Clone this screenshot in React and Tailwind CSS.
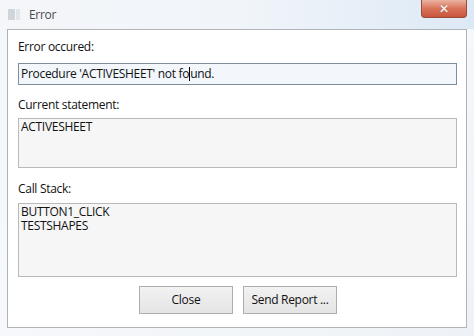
const FONT = { fontFamily: '"Open Sans", "Noto Sans", sans-serif' };

function TextArea({ text, className }) {
  return (
    <div
      className={`whitespace-pre-line border border-[#b9b9b9] bg-[#f6f6f6] px-[2px] pt-[1px] text-[12px] leading-[14px] text-[#111] tracking-[-0.3px] ${className}`}
    >
      {text}
    </div>
  );
}

export default function App() {
  return (
    <div
      className="relative w-[474px] h-[336px] overflow-hidden bg-gradient-to-br from-[#f3f6fa] via-[#f6f8fb] to-[#eef2f6]"
      style={FONT}
    >
      {/* title bar */}
      <div className="flex h-[29px] items-center pl-[8px] bg-gradient-to-r from-[#f4f6f9] via-[#f1f5fa] to-[#dde9f5]">
        <div className="flex h-[11px] w-[12px] gap-[1px] opacity-40">
          <div className="h-full w-[7px] bg-[#9aa5b0]" />
          <div className="h-full w-[4px] bg-[#c5ccd3]" />
        </div>
        <span className="ml-[9px] text-[12px] text-[#4a4a4a] tracking-[-0.3px]">Error</span>
      </div>

      {/* close button */}
      <div className="absolute right-[7px] top-0 flex h-[18px] w-[46px] items-center justify-center rounded-b-[4px] border border-t-0 border-[#9a4a3a] bg-gradient-to-b from-[#eab3a2] via-[#d9735a] to-[#c8553c]">
        <span className="text-[12px] font-bold leading-none text-[#f6ece9] [text-shadow:0_0_1px_#7a2a1a]">✕</span>
      </div>

      {/* client area */}
      <div className="ml-[7px] flex h-[299px] w-[460px] flex-col border border-[#b0b4b8] bg-white pl-[10px] pr-[9px] pt-[9px] text-[#111]">
        <div className="h-[16px] text-[12px] leading-[16px] tracking-[-0.3px]">Error occured:</div>
        <div className="mt-[8px] flex h-[22px] items-center border border-[#7f8e9c] bg-[#f3f7fc] px-[2px] text-[12px] tracking-[-0.3px]">
          <span>Procedure 'ACTIVESHEET' not fo</span>
          <span className="h-[14px] w-px bg-black" />
          <span>und.</span>
        </div>

        <div className="mt-[12px] h-[16px] text-[12px] leading-[16px] tracking-[-0.3px]">Current statement:</div>
        <TextArea text="ACTIVESHEET" className="mt-[5px] h-[50px]" />

        <div className="mt-[13px] h-[16px] text-[12px] leading-[16px] tracking-[-0.3px]">Call Stack:</div>
        <TextArea text={"BUTTON1_CLICK\nTESTSHAPES"} className="mt-[6px] h-[74px]" />

        <div className="mt-[9px] flex justify-center gap-[10px] pl-[1px]">
          <button className="h-[28px] w-[94px] border border-[#adadad] bg-gradient-to-b from-[#f2f2f2] to-[#e4e4e4] text-[12px] tracking-[-0.3px] text-[#111]">
            Close
          </button>
          <button className="h-[28px] w-[94px] border border-[#adadad] bg-gradient-to-b from-[#f2f2f2] to-[#e4e4e4] text-[12px] tracking-[-0.3px] text-[#111]">
            Send Report ...
          </button>
        </div>
      </div>
    </div>
  );
}
